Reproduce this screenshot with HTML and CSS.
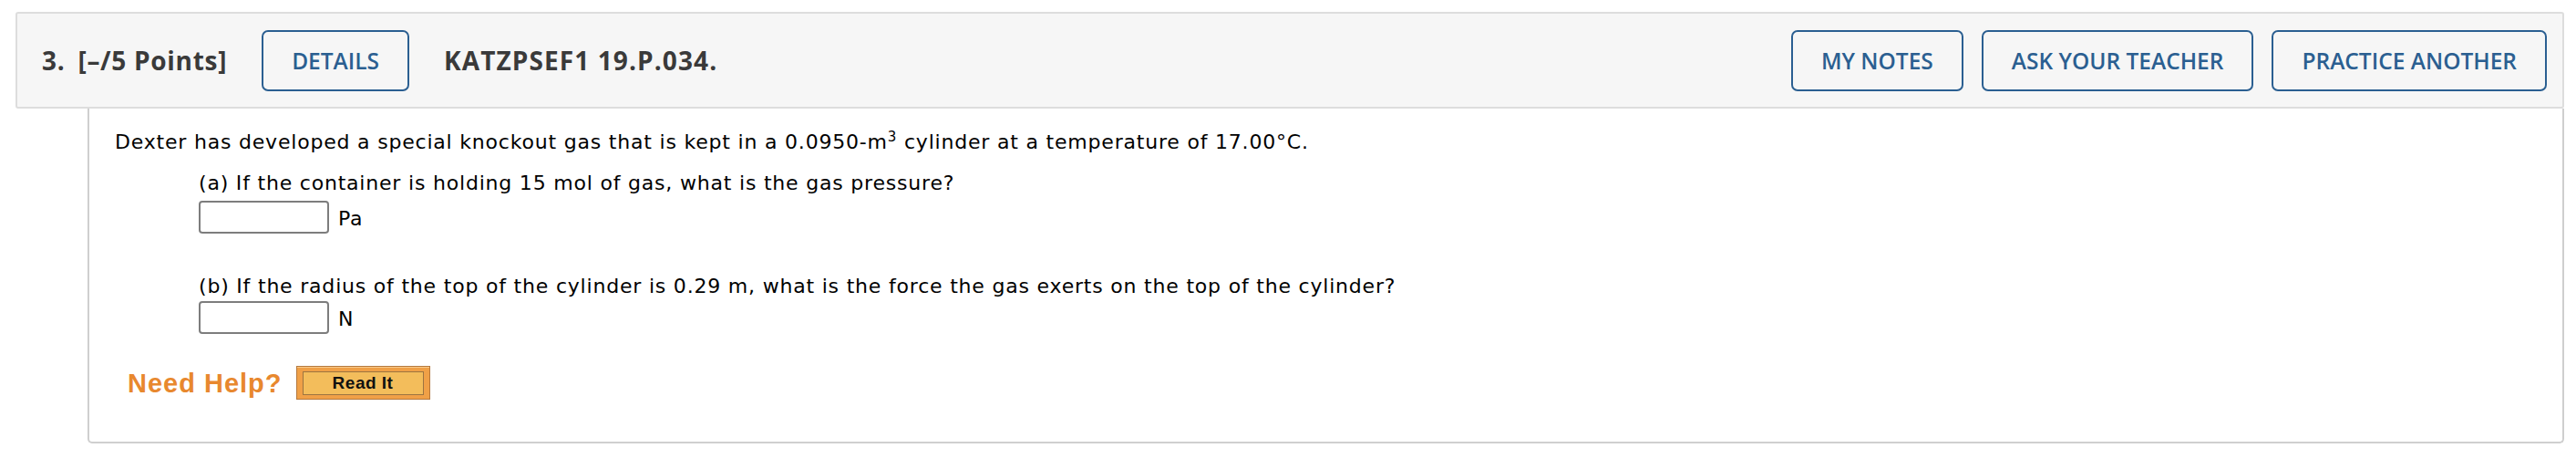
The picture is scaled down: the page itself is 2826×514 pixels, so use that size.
FILE: index.html
```html
<!DOCTYPE html>
<html lang="en">
<head>
  <meta charset="UTF-8" />
  <title>Question 3</title>
  <link rel="stylesheet" href="styles.css">
</head>
<body>
  <div class="question">
    <div class="question-header">
      <span class="q-number">3.</span>
      <span class="q-points">[–/5 Points]</span>
      <button class="hdr-btn">DETAILS</button>
      <span class="q-code">KATZPSEF1 19.P.034.</span>
      <div class="hdr-actions">
        <button class="hdr-btn">MY NOTES</button>
        <button class="hdr-btn">ASK YOUR TEACHER</button>
        <button class="hdr-btn">PRACTICE ANOTHER</button>
      </div>
    </div>

    <div class="question-body">
      <p class="prompt">Dexter has developed a special knockout gas that is kept in a 0.0950-m<sup>3</sup> cylinder at a temperature of 17.00°C.</p>

      <div class="part part-a">
        <p>(a) If the container is holding 15 mol of gas, what is the gas pressure?</p>
        <div class="answer-row">
          <input type="text" class="answer" />
          <span class="unit">Pa</span>
        </div>
      </div>

      <div class="part part-b">
        <p>(b) If the radius of the top of the cylinder is 0.29 m, what is the force the gas exerts on the top of the cylinder?</p>
        <div class="answer-row">
          <input type="text" class="answer" />
          <span class="unit">N</span>
        </div>
      </div>

      <div class="help-row">
        <span class="need-help">Need Help?</span>
        <button class="read-it"><span class="read-it-inner">Read It</span></button>
      </div>
    </div>
  </div>
</body>
</html>
```

FILE: styles.css
```css
body {
  margin: 0;
  padding: 13px 13px 0 17px;
  background-color: #ffffff;
  font-family: "DejaVu Sans", Verdana, sans-serif;
  color: #000;
}

.question-header {
  display: flex;
  align-items: center;
  height: 106px;
  box-sizing: border-box;
  background-color: #f6f6f6;
  border: 2px solid #dddddd;
  border-radius: 3px;
  padding: 0 17px 0 27px;
  font-family: "Open Sans", sans-serif;
  color: #3a3a3a;
}

.q-number,
.q-points,
.q-code {
  font-size: 28px;
  font-weight: 700;
  letter-spacing: 0.7px;
}

.q-number {
  margin-right: 14px;
}

.q-points {
  margin-right: 38px;
}

.q-code {
  margin-left: 38px;
  letter-spacing: 1.1px;
}

.hdr-btn {
  height: 67px;
  padding: 0 31px;
  background-color: transparent;
  border: 2px solid #2b5f91;
  border-radius: 7px;
  color: #2b5f91;
  font-family: "Open Sans", sans-serif;
  font-size: 24.5px;
  font-weight: 600;
  cursor: pointer;
}

.hdr-actions {
  margin-left: auto;
  display: flex;
  gap: 20px;
}

.question-body {
  margin-left: 79px;
  border: 2px solid #cfcfcf;
  border-top: none;
  border-radius: 0 0 5px 5px;
  padding: 25px 28px 46px 28px;
  font-size: 22px;
  line-height: 24px;
  letter-spacing: 0.8px;
}

.question-body p {
  margin: 0;
}

.prompt sup {
  font-size: 15px;
  line-height: 0;
}

.part {
  margin-left: 92px;
  margin-top: 21px;
}

.part-b {
  margin-top: 46px;
}

.answer-row {
  display: flex;
  align-items: center;
  margin-top: 7px;
}

.part-b .answer-row {
  margin-top: 4px;
}

.answer {
  width: 143px;
  height: 36px;
  box-sizing: border-box;
  border: 2px solid #7d7d7d;
  border-radius: 4px;
  margin: 0;
}

.unit {
  margin-left: 10px;
  padding-top: 4px;
}

.help-row {
  display: flex;
  align-items: center;
  margin-top: 35px;
  margin-left: 14px;
}

.need-help {
  font-family: "Liberation Sans", Arial, sans-serif;
  font-size: 29px;
  font-weight: 700;
  letter-spacing: 1px;
  color: #e8882e;
}

.read-it {
  margin-left: 15px;
  width: 147px;
  height: 37px;
  padding: 5px 6px 4px 6px;
  box-sizing: border-box;
  background-color: #f0a047;
  border: 1px solid #b5783c;
  border-radius: 0;
  box-shadow: inset 0 1px 0 #f8c98a;
  cursor: pointer;
}

.read-it-inner {
  display: block;
  height: 100%;
  box-sizing: border-box;
  background-color: #f3bd5b;
  border: 1px solid #9c7441;
  font-family: "Liberation Sans", Arial, sans-serif;
  font-size: 19px;
  font-weight: 700;
  letter-spacing: 0.5px;
  line-height: 24px;
  color: #111;
}
```
